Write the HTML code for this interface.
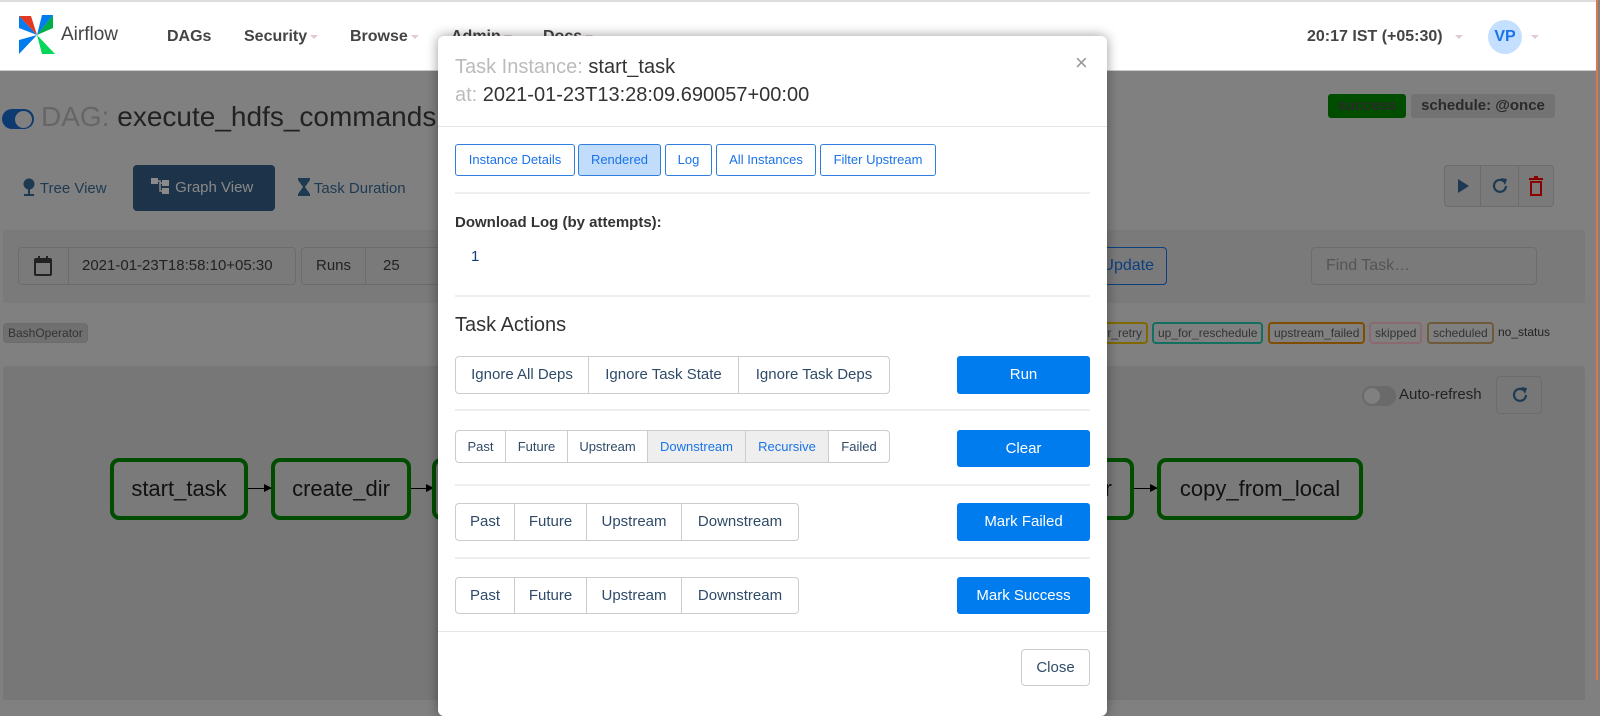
<!DOCTYPE html>
<html><head><style>
*{box-sizing:border-box;margin:0;padding:0}
body{width:1600px;height:700px;overflow:hidden;background:#808080;font-family:"Liberation Sans",sans-serif;position:relative;color:#333}
.a{position:absolute}
.nav{left:0;top:0;width:1597px;height:71px;background:#fff;border-top:2px solid #ddd;border-bottom:1px solid #ccc}
.ni{position:absolute;top:26px;font-size:16px;font-weight:bold;color:#444}
.car{display:inline-block;border-left:4px solid transparent;border-right:4px solid transparent;border-top:4px solid #e3c8d8;vertical-align:middle;margin-left:3px}
.m{left:438px;top:36px;width:669px;height:680px;background:#fff;border-radius:6px;box-shadow:0 0 12px rgba(0,0,0,.4)}
.hr{position:absolute;left:17px;right:17px;height:2px;background:#eee}
.tab{position:absolute;top:108px;height:32px;border:1px solid #2f7fe0;border-radius:3px;color:#1a73e8;font-size:13px;line-height:30px;text-align:center}
.grp{position:absolute;display:flex;border:1px solid #ccc;border-radius:4px;overflow:hidden}
.grp div{border-right:1px solid #ccc;color:#2f4b68;text-align:center}
.grp div:last-child{border-right:none}
.bb{position:absolute;left:519px;width:133px;background:#017cee;color:#fff;border-radius:3px;text-align:center;font-size:15px}
.node{position:absolute;top:458px;height:62px;border:4px solid #004d00;border-radius:9px;background:#7a7a7a;color:#111;font-size:22px;line-height:54px;text-align:center}
.arr{position:absolute;top:488px;height:1px;background:#000}
.arr:after{content:"";position:absolute;right:-1px;top:-4px;border-left:8px solid #000;border-top:4.5px solid transparent;border-bottom:4.5px solid transparent}
.lg{position:absolute;top:322px;height:22px;font-size:12px;line-height:18px;border:2px solid;border-radius:4px;padding:0 4px;color:#333}
</style></head><body>
<div class="a nav">
 <svg class="a" style="left:17px;top:12px" width="40" height="42" viewBox="0 0 40 42"><path d="M20 21 L2 2 L14 2 Z" fill="#e43921"/><path d="M20 21 L36 1 L36 14 Z" fill="#00ad46"/><path d="M20 21 L2 40 L2 26 Z" fill="#017cee"/><path d="M20 21 L38 40 L25 40 Z" fill="#04d659"/><path d="M20 21 L2 2 L2 14Z" fill="#017cee"/><path d="M20 21 L36 1 L25 1Z" fill="#017cee"/></svg>
 <div class="a" style="left:61px;top:22px;font-size:19px;color:#444">Airflow</div>
 <div class="ni" style="left:167px">DAGs</div>
 <div class="ni" style="left:244px">Security<span class="car"></span></div>
 <div class="ni" style="left:350px">Browse<span class="car"></span></div>
 <div class="ni" style="left:451px">Admin<span class="car"></span></div>
 <div class="ni" style="left:543px">Docs<span class="car"></span></div>
 <div class="ni" style="left:1307px">20:17 IST (+05:30)<span class="car" style="margin-left:12px"></span></div>
 <div class="a" style="left:1488px;top:18px;width:34px;height:34px;border-radius:50%;background:#c4dfff;color:#1a73e8;font-weight:bold;font-size:16px;line-height:34px;text-align:center">VP</div>
 <span class="car a" style="left:1528px;top:33px"></span>
</div>
<div class="a" style="left:1596px;top:0;width:2px;height:680px;background:#d9774f"></div>
<div class="a" style="left:2px;top:109px;width:32px;height:20px;border-radius:10px;background:#0d3a70"></div>
<div class="a" style="left:15px;top:111px;width:17px;height:17px;border-radius:50%;background:#808080"></div>
<div class="a" style="left:41px;top:101px;font-size:28px;color:#222"><span style="color:#666">DAG:</span> execute_hdfs_commands</div>
<div class="a" style="left:1328px;top:94px;width:78px;height:24px;background:#004d00;color:#2a2a2a;font-weight:bold;font-size:15px;line-height:24px;text-align:center;border-radius:3px">success</div>
<div class="a" style="left:1411px;top:94px;width:144px;height:24px;background:#737373;color:#2a2a2a;font-weight:bold;font-size:15px;line-height:24px;text-align:center;border-radius:3px">schedule: @once</div>
<div class="a" style="left:22px;top:178px;font-size:15px;color:#1e3a52"><svg width="14" height="18" viewBox="0 0 14 18" style="vertical-align:-3px"><circle cx="7" cy="6" r="5.5" fill="#1e3a52"/><rect x="6" y="11" width="2" height="6" fill="#1e3a52"/><rect x="2" y="16" width="10" height="2" fill="#1e3a52"/></svg> Tree View</div>
<div class="a" style="left:133px;top:165px;width:142px;height:46px;background:#1d3349;border-radius:4px;color:#8a8a8a;font-size:15px;line-height:46px;padding-left:18px"><svg width="20" height="16" viewBox="0 0 20 16" style="vertical-align:-2px"><rect x="0" y="0" width="7" height="6" fill="#8a8a8a"/><rect x="11" y="2" width="7" height="6" fill="#8a8a8a"/><rect x="11" y="10" width="7" height="6" fill="#8a8a8a"/><path d="M7 3H9V13H11M9 5H11" stroke="#8a8a8a" stroke-width="1.5" fill="none"/></svg> Graph View</div>
<div class="a" style="left:298px;top:178px;font-size:15px;color:#1e3a52"><svg width="12" height="18" viewBox="0 0 12 18" style="vertical-align:-3px"><path d="M0 0H12V2L7 9L12 16V18H0V16L5 9L0 2Z" fill="#1e3a52"/></svg> Task Duration</div>
<div class="a" style="left:1444px;top:165px;width:110px;height:42px;border:1px solid #6c6c6c;border-radius:4px;background:#7a7a7a;display:flex">
 <div style="width:37px;border-right:1px solid #6c6c6c;position:relative"><svg class="a" style="left:13px;top:13px" width="12" height="14"><path d="M0 0L11 7L0 14Z" fill="#1e3a52"/></svg></div>
 <div style="width:38px;border-right:1px solid #6c6c6c;position:relative"><svg class="a" style="left:10px;top:11px" width="18" height="18" viewBox="0 0 18 18"><path d="M15 9A6 6 0 1 1 12.5 4" stroke="#1e3a52" stroke-width="2.2" fill="none"/><path d="M10 1L16 2L14 8Z" fill="#1e3a52"/></svg></div>
 <div style="width:35px;position:relative"><svg class="a" style="left:10px;top:10px" width="14" height="20" viewBox="0 0 14 20"><rect x="0" y="2" width="14" height="2" fill="#8a0000"/><rect x="5" y="0" width="4" height="2" fill="#8a0000"/><rect x="2" y="6" width="10" height="13" fill="none" stroke="#8a0000" stroke-width="2"/></svg></div></div>
<div class="a" style="left:3px;top:230px;width:1582px;height:73px;background:#7a7a7a"></div>
<div class="a" style="left:18px;top:247px;width:278px;height:38px;border:1px solid #6c6c6c;border-radius:4px;display:flex;font-size:15px;line-height:36px;color:#222">
 <div style="width:50px;border-right:1px solid #6c6c6c;position:relative"><svg class="a" style="left:15px;top:8px" width="18" height="20" viewBox="0 0 18 20"><rect x="1" y="3" width="16" height="16" rx="1" fill="none" stroke="#222" stroke-width="2"/><rect x="1" y="3" width="16" height="4" fill="#222"/><rect x="4" y="0" width="2" height="4" fill="#222"/><rect x="12" y="0" width="2" height="4" fill="#222"/></svg></div><div style="padding-left:13px">2021-01-23T18:58:10+05:30</div></div>
<div class="a" style="left:301px;top:247px;width:140px;height:38px;border:1px solid #6c6c6c;border-radius:4px;display:flex;font-size:15px;line-height:36px;color:#222">
 <div style="width:64px;border-right:1px solid #6c6c6c;text-align:center">Runs</div><div style="padding-left:17px">25</div></div>
<div class="a" style="left:1060px;top:247px;width:107px;height:38px;border:1px solid #0c3f80;border-radius:4px;color:#0c3f80;font-size:16px;line-height:36px;text-align:right;padding-right:12px">Update</div>
<div class="a" style="left:1311px;top:247px;width:226px;height:38px;border:1px solid #6c6c6c;border-radius:4px;color:#555;font-size:16px;line-height:36px;padding-left:14px">Find Task…</div>
<div class="lg" style="left:3px;border-color:#6c6c6c;border-width:1px;background:#707070;top:323px;height:20px">BashOperator</div>
<div class="lg" style="left:1080px;border-color:#806a00;width:68px;text-align:right">r_retry</div>
<div class="lg" style="left:1152px;border-color:#137060">up_for_reschedule</div>
<div class="lg" style="left:1268px;border-color:#7f4d00">upstream_failed</div>
<div class="lg" style="left:1369px;border-color:#8a6a70">skipped</div>
<div class="lg" style="left:1427px;border-color:#6f5a3a">scheduled</div>
<div class="a" style="left:1498px;top:325px;font-size:12px;color:#222">no_status</div>
<div class="a" style="left:3px;top:366px;width:1582px;height:334px;background:#777;border-radius:4px 4px 0 0"></div>
<div class="a" style="left:1362px;top:386px;width:34px;height:20px;border-radius:10px;background:#6a6a6a"></div>
<div class="a" style="left:1364px;top:388px;width:16px;height:16px;border-radius:50%;background:#808080"></div>
<div class="a" style="left:1399px;top:386px;font-size:15px;color:#222">Auto-refresh</div>
<div class="a" style="left:1496px;top:376px;width:46px;height:38px;border:1px solid #6c6c6c;border-radius:4px"><svg class="a" style="left:14px;top:9px" width="18" height="18" viewBox="0 0 18 18"><path d="M15 9A6 6 0 1 1 12.5 4" stroke="#1e3a52" stroke-width="2.2" fill="none"/><path d="M10 1L16 2L14 8Z" fill="#1e3a52"/></svg></div>
<div class="node" style="left:110px;width:138px">start_task</div>
<div class="arr" style="left:248px;width:23px"></div>
<div class="node" style="left:271px;width:140px">create_dir</div>
<div class="arr" style="left:411px;width:22px"></div>
<div class="node" style="left:432px;width:200px"></div>
<div class="node" style="left:900px;width:234px;text-align:right;padding-right:18px">dir</div>
<div class="arr" style="left:1134px;width:23px"></div>
<div class="node" style="left:1157px;width:206px">copy_from_local</div>
<div class="a m">
 <div class="a" style="left:17px;top:20px;font-size:20px;color:#333"><span style="color:#bbb">Task Instance:</span> start_task</div>
 <div class="a" style="left:17px;top:48px;font-size:20px;color:#333"><span style="color:#bbb">at:</span> 2021-01-23T13:28:09.690057+00:00</div>
 <div class="a" style="left:637px;top:14px;font-size:22px;color:#999">×</div>
 <div class="a" style="left:0;right:0;top:90px;height:1px;background:#e5e5e5"></div>
 <div class="tab" style="left:17px;width:120px">Instance Details</div>
 <div class="tab" style="left:140px;width:83px;background:#c2ddfb">Rendered</div>
 <div class="tab" style="left:227px;width:47px">Log</div>
 <div class="tab" style="left:278px;width:100px">All Instances</div>
 <div class="tab" style="left:382px;width:116px">Filter Upstream</div>
 <div class="hr" style="top:156px"></div>
 <div class="a" style="left:17px;top:178px;font-size:15px;font-weight:bold;color:#333">Download Log (by attempts):</div>
 <div class="a" style="left:33px;top:212px;font-size:15px;color:#0c3f80">1</div>
 <div class="hr" style="top:259px"></div>
 <div class="a" style="left:17px;top:278px;font-size:20px;color:#333">Task Actions</div>
 <div class="grp" style="left:17px;top:320px;height:38px;font-size:15px;line-height:36px"><div style="width:133px">Ignore All Deps</div><div style="width:150px">Ignore Task State</div><div style="width:150px">Ignore Task Deps</div></div>
 <div class="bb" style="top:320px;height:38px;line-height:38px">Run</div>
 <div class="hr" style="top:373px"></div>
 <div class="grp" style="left:17px;top:394px;height:33px;font-size:13px;line-height:31px"><div style="width:50px">Past</div><div style="width:62px">Future</div><div style="width:80px">Upstream</div><div style="width:98px;background:#eee;color:#1a73e8">Downstream</div><div style="width:83px;background:#eee;color:#1a73e8">Recursive</div><div style="width:60px">Failed</div></div>
 <div class="bb" style="top:394px;height:37px;line-height:37px">Clear</div>
 <div class="hr" style="top:448px"></div>
 <div class="grp" style="left:17px;top:467px;height:38px;font-size:15px;line-height:36px"><div style="width:59px">Past</div><div style="width:72px">Future</div><div style="width:95px">Upstream</div><div style="width:116px">Downstream</div></div>
 <div class="bb" style="top:467px;height:38px;line-height:38px">Mark Failed</div>
 <div class="hr" style="top:521px"></div>
 <div class="grp" style="left:17px;top:541px;height:37px;font-size:15px;line-height:35px"><div style="width:59px">Past</div><div style="width:72px">Future</div><div style="width:95px">Upstream</div><div style="width:116px">Downstream</div></div>
 <div class="bb" style="top:541px;height:37px;line-height:37px">Mark Success</div>
 <div class="a" style="left:0;right:0;top:595px;height:1px;background:#e5e5e5"></div>
 <div class="a" style="left:583px;top:613px;width:69px;height:37px;border:1px solid #ccc;border-radius:4px;font-size:15px;line-height:35px;text-align:center;color:#2f4b68">Close</div>
</div>
</body></html>
